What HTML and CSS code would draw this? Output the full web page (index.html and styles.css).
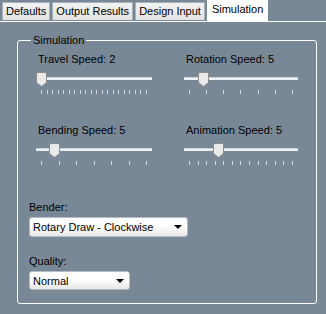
FILE: index.html
```html
<!DOCTYPE html>
<html lang="en">
<head>
    <meta charset="UTF-8">
    <title>Simulation</title>
    <link rel="stylesheet" href="styles.css">
</head>
<body>

    <!-- Tab strip -->
    <div class="tabs">
        <div class="tab">Defaults</div>
        <div class="tab">Output Results</div>
        <div class="tab">Design Input</div>
        <div class="tab active">Simulation</div>
    </div>

    <div class="page">
        <fieldset class="group">
            <legend>Simulation</legend>

            <!-- Speed sliders -->
            <div class="sliders">
                <div class="field">
                    <div class="label">Travel Speed: 2</div>
                    <div class="slider">
                        <div class="track"></div>
                        <svg class="thumb" style="left: 0px" width="11" height="15" viewBox="0 0 11 15"><path d="M2 .5h7a1.5 1.5 0 0 1 1.5 1.5v8.5l-5 4-5-4v-8.5a1.5 1.5 0 0 1 1.5-1.5z" fill="#eaeaea" stroke="#8d8d8d"/></svg>
                    </div>
                    <div class="ticks t20"></div>
                </div>
                <div class="field">
                    <div class="label">Rotation Speed: 5</div>
                    <div class="slider">
                        <div class="track"></div>
                        <svg class="thumb" style="left: 14px" width="11" height="15" viewBox="0 0 11 15"><path d="M2 .5h7a1.5 1.5 0 0 1 1.5 1.5v8.5l-5 4-5-4v-8.5a1.5 1.5 0 0 1 1.5-1.5z" fill="#eaeaea" stroke="#8d8d8d"/></svg>
                    </div>
                    <div class="ticks t7"></div>
                </div>
                <div class="field">
                    <div class="label">Bending Speed: 5</div>
                    <div class="slider">
                        <div class="track"></div>
                        <svg class="thumb" style="left: 13px" width="11" height="15" viewBox="0 0 11 15"><path d="M2 .5h7a1.5 1.5 0 0 1 1.5 1.5v8.5l-5 4-5-4v-8.5a1.5 1.5 0 0 1 1.5-1.5z" fill="#eaeaea" stroke="#8d8d8d"/></svg>
                    </div>
                    <div class="ticks t7"></div>
                </div>
                <div class="field">
                    <div class="label">Animation Speed: 5</div>
                    <div class="slider">
                        <div class="track"></div>
                        <svg class="thumb" style="left: 29px" width="11" height="15" viewBox="0 0 11 15"><path d="M2 .5h7a1.5 1.5 0 0 1 1.5 1.5v8.5l-5 4-5-4v-8.5a1.5 1.5 0 0 1 1.5-1.5z" fill="#eaeaea" stroke="#8d8d8d"/></svg>
                    </div>
                    <div class="ticks t13"></div>
                </div>
            </div>

            <!-- Drop downs -->
            <div class="label">Bender:</div>
            <div class="combo wide">Rotary Draw - Clockwise<span class="arrow"></span></div>

            <div class="label quality">Quality:</div>
            <div class="combo narrow">Normal<span class="arrow"></span></div>
        </fieldset>
    </div>

    <script>
        // Fill tick rows
        document.querySelectorAll('.ticks').forEach(function (row) {
            const count = parseInt(row.className.match(/t(\d+)/)[1]);
            for (let i = 0; i < count; i++) {
                row.appendChild(document.createElement('i'));
            }
        });
    </script>

</body>
</html>
```

FILE: styles.css
```css
body {
    margin: 0;
    font-family: "Liberation Sans", Arial, sans-serif;
    font-size: 11px;
    color: #000;
    background-color: #798897;
    width: 326px;
    height: 314px;
    overflow: hidden;
}

.tabs {
    display: flex;
    align-items: flex-end;
    gap: 2px;
    height: 21px;
    padding-left: 2px;
    border-bottom: 1px solid #fff;
}

.tab {
    height: 17px;
    line-height: 17px;
    padding: 0 3px;
    margin-bottom: 1px;
    background: linear-gradient(#f2f2f2, #e3e3e3);
    border: 1px solid #a9b1b9;
    border-bottom: none;
}

.tab.active {
    height: 21px;
    line-height: 19px;
    margin-bottom: 0;
    padding: 0 4px;
    background: #fff;
    border-color: #fff;
}

.page {
    padding: 12px 0 0 17px;
}

.group {
    box-sizing: border-box;
    width: 300px;
    height: 270px;
    margin: 0;
    padding: 6px 10px 0 11px;
    border: 1px solid #fff;
    border-radius: 3px;
}

.group legend {
    padding: 0 2px;
    margin-left: 2px;
    line-height: 13px;
}

.label {
    line-height: 13px;
}

.sliders {
    display: grid;
    grid-template-columns: 116px 114px;
    column-gap: 32px;
    row-gap: 30px;
    margin-left: 7px;
    margin-bottom: 36px;
}

.field .label {
    padding-left: 2px;
}

.slider {
    position: relative;
    height: 14px;
    margin-top: 6px;
    padding-top: 5px;
    box-sizing: border-box;
}

.track {
    height: 3px;
    background: #eef2f5;
    border-top: 1px solid #cdd3d9;
    box-sizing: border-box;
}

.thumb {
    position: absolute;
    top: 0;
}

.ticks {
    display: flex;
    justify-content: space-between;
    height: 4px;
    margin-top: 4px;
    padding: 0 5px;
}

.ticks i {
    width: 1px;
    background: #d3dae1;
}

.combo {
    position: relative;
    box-sizing: border-box;
    height: 20px;
    line-height: 18px;
    margin-top: 3px;
    padding-left: 3px;
    background: linear-gradient(#ffffff, #ffffff 45%, #e6e6e6);
    border: 1px solid #b5bcc3;
    border-radius: 3px;
}

.combo.wide {
    width: 159px;
}

.combo.narrow {
    width: 101px;
    height: 19px;
}

.quality {
    margin-top: 18px;
}

.arrow {
    position: absolute;
    right: 5px;
    top: 7px;
    border-left: 4px solid transparent;
    border-right: 4px solid transparent;
    border-top: 4px solid #000;
}
```
